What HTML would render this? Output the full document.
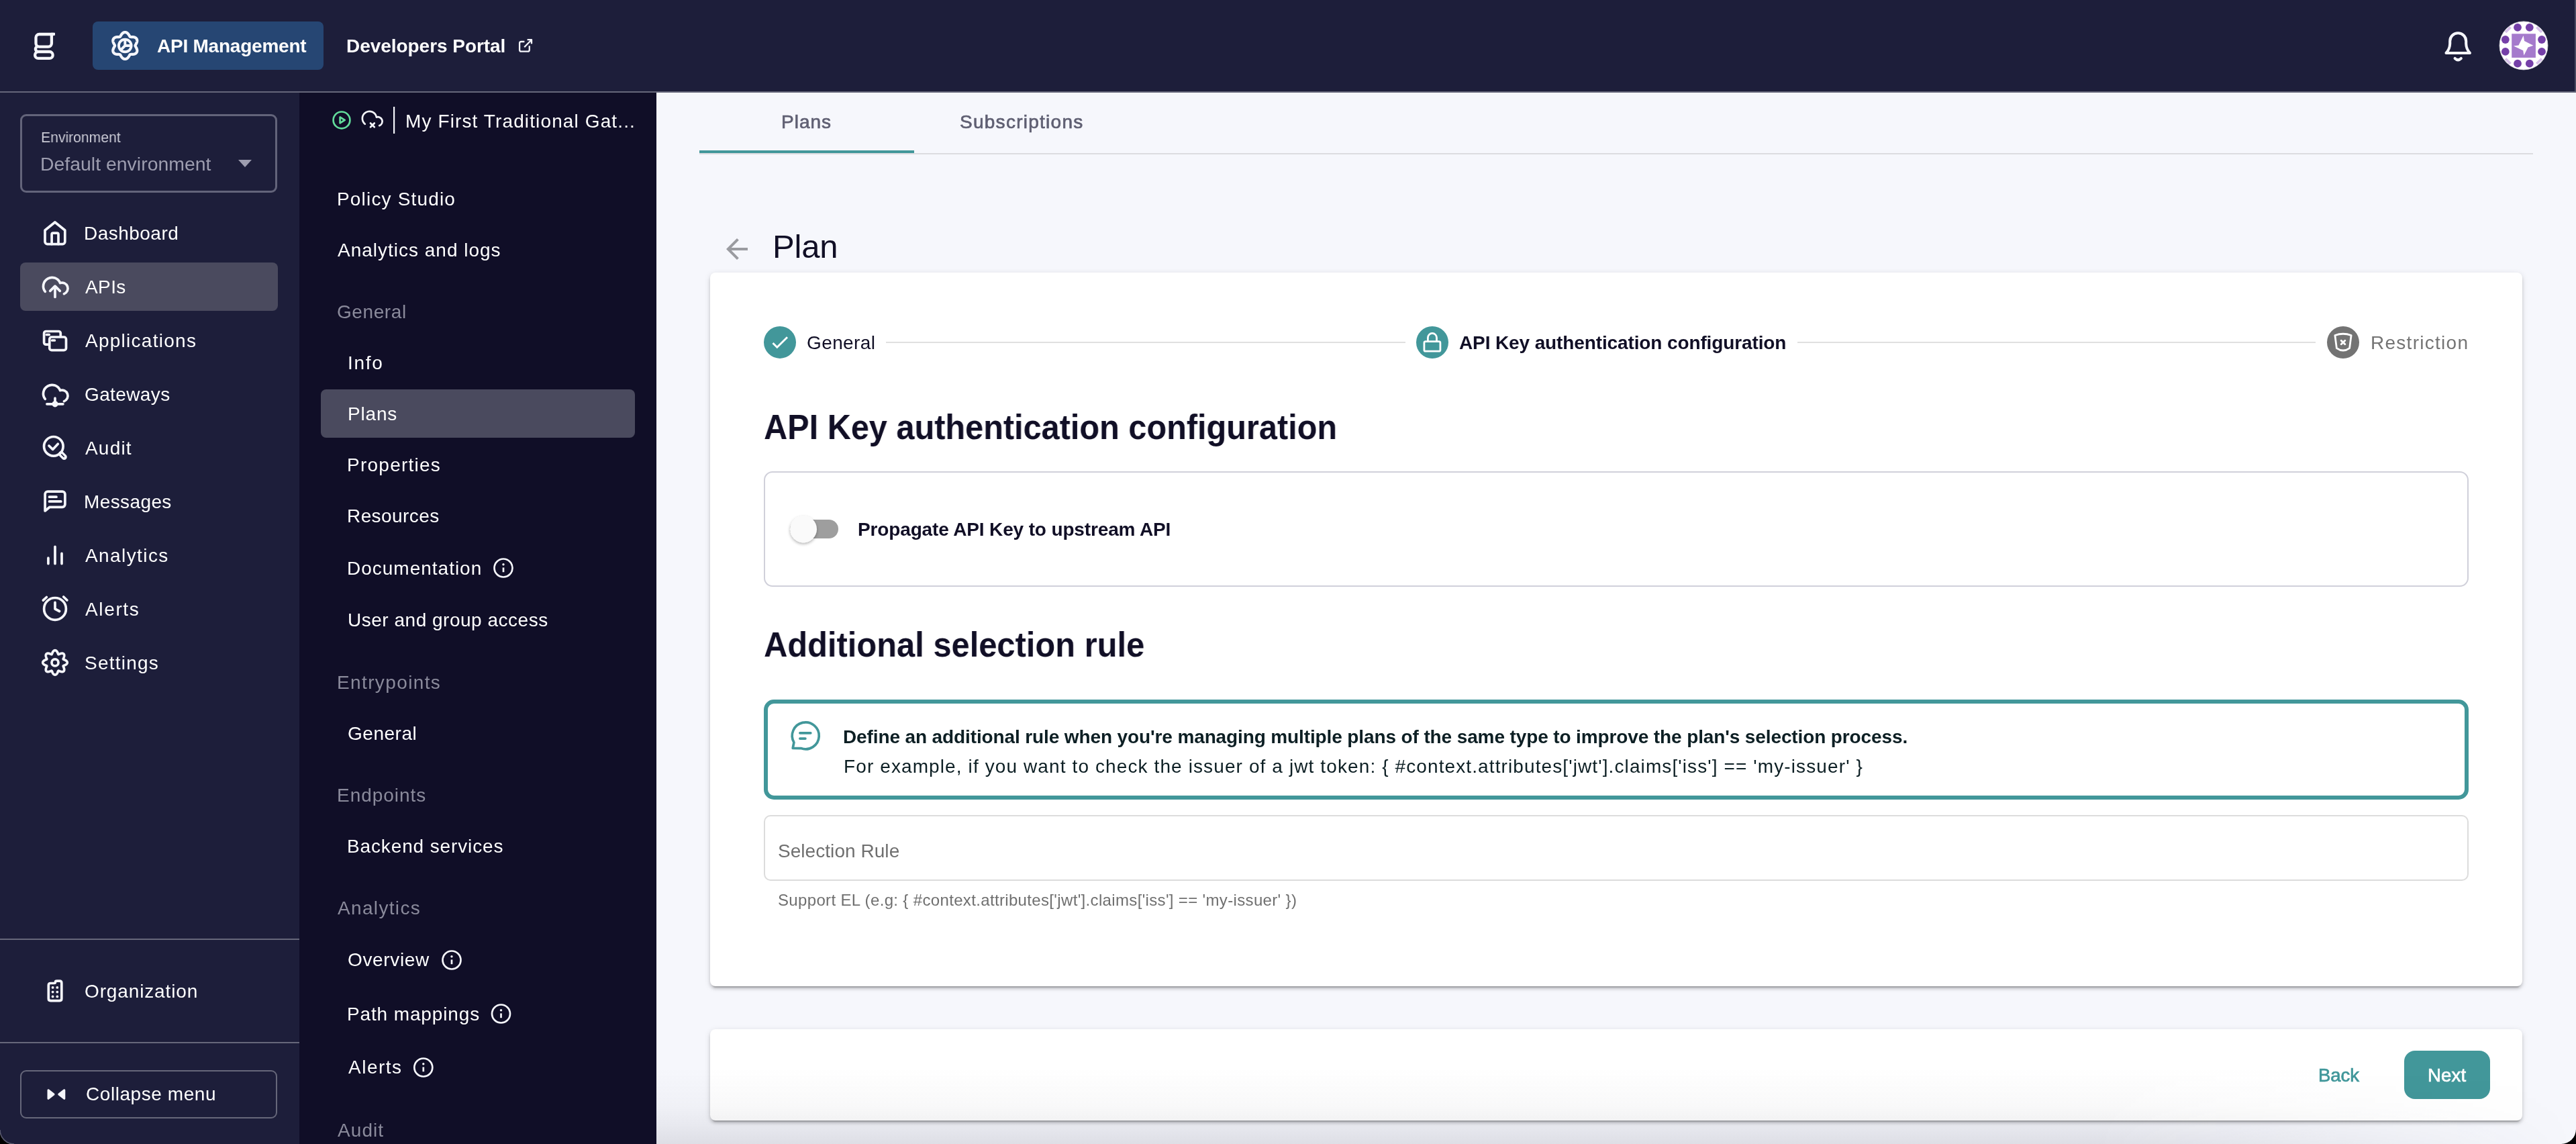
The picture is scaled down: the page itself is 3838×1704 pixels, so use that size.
<!DOCTYPE html>
<html><head><meta charset="utf-8"><title>Plan</title>
<style>
html,body{margin:0;padding:0;background:#000;overflow:hidden}
#root{position:relative;width:1919px;height:852px;overflow:hidden;background:#f6f7fc;zoom:2;font-family:"Liberation Sans",sans-serif}
.t{position:absolute;white-space:nowrap;line-height:1;font-family:"Liberation Sans",sans-serif;will-change:transform}
.a{position:absolute;box-sizing:border-box}
svg.ov{position:absolute;left:0;top:0;width:1919px;height:852px}
@media (max-width:2600px){#root{zoom:1}}
</style></head><body><div id="root">
<!-- top bar -->
<div class="a" style="left:0;top:0;width:1919px;height:69px;background:#1d1e3a;border-bottom:1px solid #66677a"></div>
<div class="a" style="left:69px;top:16.2px;width:172px;height:35.8px;background:#264673;border-radius:4px"></div>
<!-- left sidebar -->
<div class="a" style="left:0;top:69px;width:223px;height:783px;background:#1d1e3a"></div>
<div class="a" style="left:15px;top:85px;width:191.4px;height:58.5px;border:1.5px solid #63647a;border-radius:4.5px"></div>
<div class="a" style="left:177.5px;top:119px;width:0;height:0;border-left:5px solid transparent;border-right:5px solid transparent;border-top:5.5px solid #9d9daf"></div>
<div class="a" style="left:15px;top:195.6px;width:192px;height:35.9px;background:#4a4a5e;border-radius:4px"></div>
<div class="a" style="left:0;top:699px;width:223px;height:1px;background:#66677a"></div>
<div class="a" style="left:0;top:776px;width:223px;height:1px;background:#66677a"></div>
<div class="a" style="left:15px;top:797px;width:191.5px;height:35.8px;border:1px solid #66677a;border-radius:4.5px"></div>
<!-- secondary sidebar -->
<div class="a" style="left:223px;top:69px;width:266px;height:783px;background:#100e27"></div>
<div class="a" style="left:239px;top:290px;width:233.75px;height:35.8px;background:#4a4a5e;border-radius:4px"></div>
<!-- main -->
<div class="a" style="left:521px;top:114px;width:1366px;height:1px;background:#dcdce0"></div>
<div class="a" style="left:521px;top:112px;width:160px;height:2px;background:#42979a"></div>
<div class="a" style="left:529px;top:203px;width:1350px;height:531.5px;background:#fff;border-radius:4px;box-shadow:0 3px 1px -2px rgba(0,0,0,.2),0 2px 2px 0 rgba(0,0,0,.14),0 1px 5px 0 rgba(0,0,0,.12)"></div>
<div class="a" style="left:529px;top:766.5px;width:1350px;height:68px;background:#fff;border-radius:4px;box-shadow:0 3px 1px -2px rgba(0,0,0,.2),0 2px 2px 0 rgba(0,0,0,.14),0 1px 5px 0 rgba(0,0,0,.12)"></div>
<div class="a" style="left:660px;top:254.5px;width:386.75px;height:1px;background:#e0e0e0"></div>
<div class="a" style="left:1339px;top:254.5px;width:386px;height:1px;background:#e0e0e0"></div>
<div class="a" style="left:569px;top:351px;width:1270px;height:86px;border:1px solid #d0d0da;border-radius:6.5px"></div>
<div class="a" style="left:569px;top:521px;width:1270px;height:74.5px;border:3px solid #42979a;border-radius:7.5px"></div>
<div class="a" style="left:569px;top:607px;width:1270px;height:49px;border:1px solid #dcdcdc;border-radius:5px"></div>
<div class="a" style="left:1791px;top:782.5px;width:64px;height:36px;background:#42979a;border-radius:8px"></div>
<svg class="ov" viewBox="0 0 3838 1704">
<g fill="none" stroke="#f5f6fb" stroke-width="4.3" stroke-linejoin="round" stroke-linecap="butt"><path d="M80 51 H58.5 a5 5 0 0 0 -5 5 V64.6 a5 5 0 0 0 5 5 H71.9 a5 5 0 0 0 5 -5 V51"/><path d="M55.5 69 C52 71.5 52 74.5 55.5 77"/><rect x="52.1" y="77" width="26.6" height="9.9" rx="4.95"/></g><rect x="76" y="48.8" width="6" height="4" fill="#f5f6fb"/>
<path d="M201.50 68.00 L201.56 68.27 L201.65 68.54 L201.78 68.81 L201.92 69.09 L202.07 69.38 L202.24 69.68 L202.41 69.98 L202.59 70.29 L202.76 70.61 L202.94 70.93 L203.11 71.27 L203.28 71.61 L203.45 71.96 L203.60 72.31 L203.74 72.67 L203.87 73.04 L203.98 73.41 L204.08 73.78 L204.16 74.15 L204.22 74.52 L204.26 74.89 L204.28 75.26 L204.28 75.63 L204.25 75.99 L204.21 76.35 L204.14 76.70 L204.04 77.04 L203.92 77.37 L203.78 77.69 L203.62 78.00 L203.43 78.30 L203.23 78.58 L203.00 78.84 L202.75 79.10 L202.48 79.33 L202.20 79.55 L201.90 79.75 L201.58 79.94 L201.25 80.11 L200.91 80.26 L200.55 80.39 L200.19 80.51 L199.82 80.61 L199.45 80.69 L199.07 80.77 L198.68 80.82 L198.30 80.87 L197.92 80.90 L197.54 80.93 L197.16 80.94 L196.79 80.95 L196.42 80.96 L196.07 80.96 L195.72 80.96 L195.38 80.97 L195.05 80.98 L194.74 81.00 L194.44 81.03 L194.16 81.08 L193.90 81.16 L193.70 81.34 L193.51 81.56 L193.34 81.81 L193.16 82.07 L192.99 82.35 L192.82 82.64 L192.64 82.94 L192.46 83.25 L192.27 83.56 L192.08 83.88 L191.88 84.20 L191.67 84.51 L191.44 84.83 L191.21 85.14 L190.97 85.44 L190.72 85.73 L190.46 86.01 L190.19 86.28 L189.90 86.54 L189.61 86.78 L189.31 87.00 L189.00 87.20 L188.68 87.38 L188.35 87.54 L188.02 87.68 L187.68 87.80 L187.34 87.88 L187.00 87.95 L186.65 87.99 L186.30 88.00 L185.95 87.99 L185.60 87.95 L185.26 87.88 L184.92 87.80 L184.58 87.68 L184.25 87.54 L183.92 87.38 L183.60 87.20 L183.29 87.00 L182.99 86.78 L182.70 86.54 L182.41 86.28 L182.14 86.01 L181.88 85.73 L181.63 85.44 L181.39 85.14 L181.16 84.83 L180.93 84.51 L180.72 84.20 L180.52 83.88 L180.33 83.56 L180.14 83.25 L179.96 82.94 L179.78 82.64 L179.61 82.35 L179.44 82.07 L179.26 81.81 L179.09 81.56 L178.90 81.34 L178.70 81.16 L178.44 81.08 L178.16 81.03 L177.86 81.00 L177.55 80.98 L177.22 80.97 L176.88 80.96 L176.53 80.96 L176.18 80.96 L175.81 80.95 L175.44 80.94 L175.06 80.93 L174.68 80.90 L174.30 80.87 L173.92 80.82 L173.53 80.77 L173.15 80.69 L172.78 80.61 L172.41 80.51 L172.05 80.39 L171.69 80.26 L171.35 80.11 L171.02 79.94 L170.70 79.75 L170.40 79.55 L170.12 79.33 L169.85 79.10 L169.60 78.84 L169.37 78.58 L169.17 78.30 L168.98 78.00 L168.82 77.69 L168.68 77.37 L168.56 77.04 L168.46 76.70 L168.39 76.35 L168.35 75.99 L168.32 75.63 L168.32 75.26 L168.34 74.89 L168.38 74.52 L168.44 74.15 L168.52 73.78 L168.62 73.41 L168.73 73.04 L168.86 72.67 L169.00 72.31 L169.15 71.96 L169.32 71.61 L169.49 71.27 L169.66 70.93 L169.84 70.61 L170.01 70.29 L170.19 69.98 L170.36 69.68 L170.53 69.38 L170.68 69.09 L170.82 68.81 L170.95 68.54 L171.04 68.27 L171.10 68.00 L171.04 67.73 L170.95 67.46 L170.82 67.19 L170.68 66.91 L170.53 66.62 L170.36 66.32 L170.19 66.02 L170.01 65.71 L169.84 65.39 L169.66 65.07 L169.49 64.73 L169.32 64.39 L169.15 64.04 L169.00 63.69 L168.86 63.33 L168.73 62.96 L168.62 62.59 L168.52 62.22 L168.44 61.85 L168.38 61.48 L168.34 61.11 L168.32 60.74 L168.32 60.37 L168.35 60.01 L168.39 59.65 L168.46 59.30 L168.56 58.96 L168.68 58.63 L168.82 58.31 L168.98 58.00 L169.17 57.70 L169.37 57.42 L169.60 57.16 L169.85 56.90 L170.12 56.67 L170.40 56.45 L170.70 56.25 L171.02 56.06 L171.35 55.89 L171.69 55.74 L172.05 55.61 L172.41 55.49 L172.78 55.39 L173.15 55.31 L173.53 55.23 L173.92 55.18 L174.30 55.13 L174.68 55.10 L175.06 55.07 L175.44 55.06 L175.81 55.05 L176.18 55.04 L176.53 55.04 L176.88 55.04 L177.22 55.03 L177.55 55.02 L177.86 55.00 L178.16 54.97 L178.44 54.92 L178.70 54.84 L178.90 54.66 L179.09 54.44 L179.26 54.19 L179.44 53.93 L179.61 53.65 L179.78 53.36 L179.96 53.06 L180.14 52.75 L180.33 52.44 L180.52 52.12 L180.72 51.80 L180.93 51.49 L181.16 51.17 L181.39 50.86 L181.63 50.56 L181.88 50.27 L182.14 49.99 L182.41 49.72 L182.70 49.46 L182.99 49.22 L183.29 49.00 L183.60 48.80 L183.92 48.62 L184.25 48.46 L184.58 48.32 L184.92 48.20 L185.26 48.12 L185.60 48.05 L185.95 48.01 L186.30 48.00 L186.65 48.01 L187.00 48.05 L187.34 48.12 L187.68 48.20 L188.02 48.32 L188.35 48.46 L188.68 48.62 L189.00 48.80 L189.31 49.00 L189.61 49.22 L189.90 49.46 L190.19 49.72 L190.46 49.99 L190.72 50.27 L190.97 50.56 L191.21 50.86 L191.44 51.17 L191.67 51.49 L191.88 51.80 L192.08 52.12 L192.27 52.44 L192.46 52.75 L192.64 53.06 L192.82 53.36 L192.99 53.65 L193.16 53.93 L193.34 54.19 L193.51 54.44 L193.70 54.66 L193.90 54.84 L194.16 54.92 L194.44 54.97 L194.74 55.00 L195.05 55.02 L195.38 55.03 L195.72 55.04 L196.07 55.04 L196.42 55.04 L196.79 55.05 L197.16 55.06 L197.54 55.07 L197.92 55.10 L198.30 55.13 L198.68 55.18 L199.07 55.23 L199.45 55.31 L199.82 55.39 L200.19 55.49 L200.55 55.61 L200.91 55.74 L201.25 55.89 L201.58 56.06 L201.90 56.25 L202.20 56.45 L202.48 56.67 L202.75 56.90 L203.00 57.16 L203.23 57.42 L203.43 57.70 L203.62 58.00 L203.78 58.31 L203.92 58.63 L204.04 58.96 L204.14 59.30 L204.21 59.65 L204.25 60.01 L204.28 60.37 L204.28 60.74 L204.26 61.11 L204.22 61.48 L204.16 61.85 L204.08 62.22 L203.98 62.59 L203.87 62.96 L203.74 63.33 L203.60 63.69 L203.45 64.04 L203.28 64.39 L203.11 64.73 L202.94 65.07 L202.76 65.39 L202.59 65.71 L202.41 66.02 L202.24 66.32 L202.07 66.62 L201.92 66.91 L201.78 67.19 L201.65 67.46 L201.56 67.73 Z" fill="none" stroke="#f5f6fb" stroke-width="4.2" stroke-linejoin="round"/>
<g fill="none" stroke="#f5f6fb" stroke-width="3.9" stroke-linecap="butt"><circle cx="186.3" cy="68" r="9.3"/><path d="M186.3 58.5 V68 H196 M186.3 68 L179.5 74.8"/></g>
<g fill="none" stroke="#f5f6fb" stroke-width="2.3" stroke-linecap="butt" stroke-linejoin="round"><path d="M781.4 62 H776.6 a2.5 2.5 0 0 0 -2.5 2.5 V74.2 a2.5 2.5 0 0 0 2.5 2.5 H786.3 a2.5 2.5 0 0 0 2.5 -2.5 V68.3"/><path d="M781.2 70.2 L792 59.2 M785.6 59.2 H792 V65.2"/></g>
<g fill="none" stroke="#f5f6fb" stroke-width="4.1" stroke-linejoin="round" stroke-linecap="round"><path d="M3644.5 79 Q3650 73 3650.2 65 V61.2 A12 12 0 0 1 3674.2 61.2 V65 Q3674.4 73 3679.9 79 Z"/><path d="M3657.6 87 Q3662.2 91.5 3666.8 87"/></g>
<circle cx="3760" cy="67.9" r="36" fill="#fff" stroke="#d9d9e0" stroke-width="0.8"/>
<circle cx="3751" cy="40.8" r="5.9" fill="#7540a8"/>
<circle cx="3768.8" cy="40.8" r="5.9" fill="#7540a8"/>
<circle cx="3732.8" cy="59" r="5.9" fill="#7540a8"/>
<circle cx="3732.8" cy="76.9" r="5.9" fill="#7540a8"/>
<circle cx="3787" cy="59" r="5.9" fill="#7540a8"/>
<circle cx="3787" cy="76.9" r="5.9" fill="#7540a8"/>
<circle cx="3751" cy="94.7" r="5.9" fill="#7540a8"/>
<circle cx="3768.8" cy="94.7" r="5.9" fill="#7540a8"/>
<g stroke="#d7c1ea" stroke-width="3.8" stroke-linecap="butt"><path d="M3733 48 L3740.5 40.5 M3779.3 40.5 L3787 48 M3733 87.5 L3740.5 95 M3779.3 95 L3787 87.5"/></g>
<rect x="3742.2" y="50.3" width="35.7" height="35.6" fill="#a57acc"/>
<path d="M3759.7 53 L3761 61 L3774.4 67.8 L3766.5 70.6 L3760.4 82.4 L3759.2 75.3 L3745 68.5 L3752.5 67.5 Z" fill="#fff"/>
<g fill="none" stroke="#f5f6fb" stroke-width="3.7" stroke-linejoin="round" stroke-linecap="round">
<path d="M67 360 V343 L81.9 331 L96.8 343 V360 a3.6 3.6 0 0 1 -3.6 3.6 H70.6 a3.6 3.6 0 0 1 -3.6 -3.6 Z"/><path d="M77.1 363.6 V349.2 a2 2 0 0 1 2 -2 H85 a2 2 0 0 1 2 2 V363.6"/>
<path d="M67.3 434.4 A13 13 0 1 1 89.6 421.6 A8.3 8.3 0 0 1 95.4 437.7"/><path d="M82 442.5 V426.5 M74.7 433.4 L82 426.1 L89.3 433.4"/>
<path d="M72 513.2 H68.6 a3 3 0 0 1 -3 -3 V496.5 a3 3 0 0 1 3 -3 H87.3 a3 3 0 0 1 3 3 V501"/><rect x="73.75" y="502" width="24.75" height="19.6" rx="3.2"/><path d="M69.3 498.5 H73.3 M77.6 507 H81.4"/>
<path d="M67.3 594.4 A13 13 0 1 1 89.6 581.6 A8.3 8.3 0 0 1 95.4 597.7"/><path d="M82 593.2 V601.8 M69.9 601.8 H93.9"/>
</g>
<circle cx="82" cy="601.8" r="4.6" fill="#f5f6fb"/>
<g fill="none" stroke="#f5f6fb" stroke-width="3.7" stroke-linejoin="round" stroke-linecap="round">
<circle cx="79.8" cy="664.8" r="14.3"/><path d="M73 664 L78.6 669.4 L86.3 661.3"/>
</g>
<path d="M91.2 676.3 L95.6 680.7" stroke="#f5f6fb" stroke-width="8.4" stroke-linecap="round"/><path d="M91.8 676.9 L95.2 680.3" stroke="#1d1e3a" stroke-width="1.5" stroke-linecap="round"/>
<g fill="none" stroke="#f5f6fb" stroke-width="3.7" stroke-linejoin="round" stroke-linecap="round">
<path d="M74 755.3 H92.9 a4 4 0 0 0 4 -4 V736.1 a4 4 0 0 0 -4 -4 H71.1 a4 4 0 0 0 -4 4 V761 Z"/><path d="M73.5 740.2 H84 M73.5 746.9 H90.8"/>
<path d="M71.9 831.2 V839.6 M82 814.3 V839.6 M92 824.4 V839.6" stroke-width="3.7"/>
<circle cx="82" cy="906.9" r="16.4"/><path d="M82 897.4 V907 L88.6 910.5"/><path d="M64.3 894.2 L69.4 889.5 M94.7 889 L99.9 894"/>
<path d="M100.20 986.90 L100.18 987.19 L100.14 987.47 L100.06 987.75 L99.95 988.03 L99.81 988.30 L99.64 988.57 L99.44 988.83 L99.22 989.08 L98.97 989.32 L98.71 989.55 L98.42 989.77 L98.12 989.98 L97.81 990.17 L97.48 990.36 L97.15 990.54 L96.81 990.70 L96.47 990.86 L96.13 991.00 L95.80 991.14 L95.47 991.28 L95.16 991.41 L94.87 991.53 L94.60 991.66 L94.37 991.80 L94.20 991.95 L94.21 992.18 L94.28 992.44 L94.38 992.72 L94.49 993.02 L94.62 993.33 L94.76 993.65 L94.89 993.99 L95.03 994.33 L95.16 994.68 L95.28 995.04 L95.39 995.40 L95.49 995.76 L95.57 996.12 L95.64 996.49 L95.69 996.84 L95.71 997.19 L95.71 997.54 L95.69 997.87 L95.65 998.19 L95.58 998.50 L95.49 998.79 L95.37 999.07 L95.23 999.32 L95.06 999.56 L94.87 999.77 L94.66 999.96 L94.42 1000.13 L94.17 1000.27 L93.89 1000.39 L93.60 1000.48 L93.29 1000.55 L92.97 1000.59 L92.64 1000.61 L92.29 1000.61 L91.94 1000.59 L91.59 1000.54 L91.22 1000.47 L90.86 1000.39 L90.50 1000.29 L90.14 1000.18 L89.78 1000.06 L89.43 999.93 L89.09 999.79 L88.75 999.66 L88.43 999.52 L88.12 999.39 L87.82 999.28 L87.54 999.18 L87.28 999.11 L87.05 999.10 L86.90 999.27 L86.76 999.50 L86.63 999.77 L86.51 1000.06 L86.38 1000.37 L86.24 1000.70 L86.10 1001.03 L85.96 1001.37 L85.80 1001.71 L85.64 1002.05 L85.46 1002.38 L85.27 1002.71 L85.08 1003.02 L84.87 1003.32 L84.65 1003.61 L84.42 1003.87 L84.18 1004.12 L83.93 1004.34 L83.67 1004.54 L83.40 1004.71 L83.13 1004.85 L82.85 1004.96 L82.57 1005.04 L82.29 1005.08 L82.00 1005.10 L81.71 1005.08 L81.43 1005.04 L81.15 1004.96 L80.87 1004.85 L80.60 1004.71 L80.33 1004.54 L80.07 1004.34 L79.82 1004.12 L79.58 1003.87 L79.35 1003.61 L79.13 1003.32 L78.92 1003.02 L78.73 1002.71 L78.54 1002.38 L78.36 1002.05 L78.20 1001.71 L78.04 1001.37 L77.90 1001.03 L77.76 1000.70 L77.62 1000.37 L77.49 1000.06 L77.37 999.77 L77.24 999.50 L77.10 999.27 L76.95 999.10 L76.72 999.11 L76.46 999.18 L76.18 999.28 L75.88 999.39 L75.57 999.52 L75.25 999.66 L74.91 999.79 L74.57 999.93 L74.22 1000.06 L73.86 1000.18 L73.50 1000.29 L73.14 1000.39 L72.78 1000.47 L72.41 1000.54 L72.06 1000.59 L71.71 1000.61 L71.36 1000.61 L71.03 1000.59 L70.71 1000.55 L70.40 1000.48 L70.11 1000.39 L69.83 1000.27 L69.58 1000.13 L69.34 999.96 L69.13 999.77 L68.94 999.56 L68.77 999.32 L68.63 999.07 L68.51 998.79 L68.42 998.50 L68.35 998.19 L68.31 997.87 L68.29 997.54 L68.29 997.19 L68.31 996.84 L68.36 996.49 L68.43 996.12 L68.51 995.76 L68.61 995.40 L68.72 995.04 L68.84 994.68 L68.97 994.33 L69.11 993.99 L69.24 993.65 L69.38 993.33 L69.51 993.02 L69.62 992.72 L69.72 992.44 L69.79 992.18 L69.80 991.95 L69.63 991.80 L69.40 991.66 L69.13 991.53 L68.84 991.41 L68.53 991.28 L68.20 991.14 L67.87 991.00 L67.53 990.86 L67.19 990.70 L66.85 990.54 L66.52 990.36 L66.19 990.17 L65.88 989.98 L65.58 989.77 L65.29 989.55 L65.03 989.32 L64.78 989.08 L64.56 988.83 L64.36 988.57 L64.19 988.30 L64.05 988.03 L63.94 987.75 L63.86 987.47 L63.82 987.19 L63.80 986.90 L63.82 986.61 L63.86 986.33 L63.94 986.05 L64.05 985.77 L64.19 985.50 L64.36 985.23 L64.56 984.97 L64.78 984.72 L65.03 984.48 L65.29 984.25 L65.58 984.03 L65.88 983.82 L66.19 983.63 L66.52 983.44 L66.85 983.26 L67.19 983.10 L67.53 982.94 L67.87 982.80 L68.20 982.66 L68.53 982.52 L68.84 982.39 L69.13 982.27 L69.40 982.14 L69.63 982.00 L69.80 981.85 L69.79 981.62 L69.72 981.36 L69.62 981.08 L69.51 980.78 L69.38 980.47 L69.24 980.15 L69.11 979.81 L68.97 979.47 L68.84 979.12 L68.72 978.76 L68.61 978.40 L68.51 978.04 L68.43 977.68 L68.36 977.31 L68.31 976.96 L68.29 976.61 L68.29 976.26 L68.31 975.93 L68.35 975.61 L68.42 975.30 L68.51 975.01 L68.63 974.73 L68.77 974.48 L68.94 974.24 L69.13 974.03 L69.34 973.84 L69.58 973.67 L69.83 973.53 L70.11 973.41 L70.40 973.32 L70.71 973.25 L71.03 973.21 L71.36 973.19 L71.71 973.19 L72.06 973.21 L72.41 973.26 L72.78 973.33 L73.14 973.41 L73.50 973.51 L73.86 973.62 L74.22 973.74 L74.57 973.87 L74.91 974.01 L75.25 974.14 L75.57 974.28 L75.88 974.41 L76.18 974.52 L76.46 974.62 L76.72 974.69 L76.95 974.70 L77.10 974.53 L77.24 974.30 L77.37 974.03 L77.49 973.74 L77.62 973.43 L77.76 973.10 L77.90 972.77 L78.04 972.43 L78.20 972.09 L78.36 971.75 L78.54 971.42 L78.73 971.09 L78.92 970.78 L79.13 970.48 L79.35 970.19 L79.58 969.93 L79.82 969.68 L80.07 969.46 L80.33 969.26 L80.60 969.09 L80.87 968.95 L81.15 968.84 L81.43 968.76 L81.71 968.72 L82.00 968.70 L82.29 968.72 L82.57 968.76 L82.85 968.84 L83.13 968.95 L83.40 969.09 L83.67 969.26 L83.93 969.46 L84.18 969.68 L84.42 969.93 L84.65 970.19 L84.87 970.48 L85.08 970.78 L85.27 971.09 L85.46 971.42 L85.64 971.75 L85.80 972.09 L85.96 972.43 L86.10 972.77 L86.24 973.10 L86.38 973.43 L86.51 973.74 L86.63 974.03 L86.76 974.30 L86.90 974.53 L87.05 974.70 L87.28 974.69 L87.54 974.62 L87.82 974.52 L88.12 974.41 L88.43 974.28 L88.75 974.14 L89.09 974.01 L89.43 973.87 L89.78 973.74 L90.14 973.62 L90.50 973.51 L90.86 973.41 L91.22 973.33 L91.59 973.26 L91.94 973.21 L92.29 973.19 L92.64 973.19 L92.97 973.21 L93.29 973.25 L93.60 973.32 L93.89 973.41 L94.17 973.53 L94.42 973.67 L94.66 973.84 L94.87 974.03 L95.06 974.24 L95.23 974.48 L95.37 974.73 L95.49 975.01 L95.58 975.30 L95.65 975.61 L95.69 975.93 L95.71 976.26 L95.71 976.61 L95.69 976.96 L95.64 977.31 L95.57 977.68 L95.49 978.04 L95.39 978.40 L95.28 978.76 L95.16 979.12 L95.03 979.47 L94.89 979.81 L94.76 980.15 L94.62 980.47 L94.49 980.78 L94.38 981.08 L94.28 981.36 L94.21 981.62 L94.20 981.85 L94.37 982.00 L94.60 982.14 L94.87 982.27 L95.16 982.39 L95.47 982.52 L95.80 982.66 L96.13 982.80 L96.47 982.94 L96.81 983.10 L97.15 983.26 L97.48 983.44 L97.81 983.63 L98.12 983.82 L98.42 984.03 L98.71 984.25 L98.97 984.48 L99.22 984.72 L99.44 984.97 L99.64 985.23 L99.81 985.50 L99.95 985.77 L100.06 986.05 L100.14 986.33 L100.18 986.61 Z"/>
<circle cx="82" cy="986.9" r="5"/>
<path d="M72.3 1467.5 Q72.3 1464.5 75.3 1464.5 H80.5 Q82.5 1464.5 82.5 1462.8 Q82.5 1461.2 84.8 1461.2 H88.8 Q91.8 1461.2 91.8 1464.2 V1487.6 Q91.8 1490.6 88.8 1490.6 H75.3 Q72.3 1490.6 72.3 1487.6 Z"/>
</g>
<circle cx="78.6" cy="1470.9" r="1.9" fill="#f5f6fb"/>
<circle cx="78.6" cy="1477.6" r="1.9" fill="#f5f6fb"/>
<circle cx="78.6" cy="1484.4" r="1.9" fill="#f5f6fb"/>
<circle cx="85.3" cy="1470.9" r="1.9" fill="#f5f6fb"/>
<circle cx="85.3" cy="1477.6" r="1.9" fill="#f5f6fb"/>
<circle cx="85.3" cy="1484.4" r="1.9" fill="#f5f6fb"/>
<g fill="#f5f6fb" stroke="#f5f6fb" stroke-width="3" stroke-linejoin="round"><path d="M72 1623.8 L80 1630 L72 1636.3 Z"/><path d="M95.8 1623.8 L87.8 1630 L95.8 1636.3 Z"/></g>
<g fill="none" stroke="#62dc9b" stroke-width="2.7" stroke-linejoin="round"><circle cx="509" cy="178.9" r="12.4"/><path d="M506.6 174.5 L513.7 178.9 L506.6 183.3 Z"/></g>
<g fill="none" stroke="#f5f6fb" stroke-width="2.7" stroke-linecap="round" stroke-linejoin="round"><path d="M543.8 184.7 A10.6 10.6 0 1 1 560.9 174.6 A6.4 6.4 0 0 1 565.2 187.1"/><path d="M552 183.5 L557.8 189.3 M557.8 183.5 L552 189.3"/></g>
<rect x="586" y="159" width="2.2" height="40" fill="#f5f6fb"/>
<g fill="none" stroke="#f5f6fb" stroke-width="2.7"><circle cx="750" cy="846" r="13.5"/></g><circle cx="750" cy="840.7" r="1.7" fill="#f5f6fb"/><rect x="748.65" y="845.4" width="2.7" height="6.8" fill="#f5f6fb"/>
<g fill="none" stroke="#f5f6fb" stroke-width="2.7"><circle cx="673" cy="1430" r="13.5"/></g><circle cx="673" cy="1424.7" r="1.7" fill="#f5f6fb"/><rect x="671.65" y="1429.4" width="2.7" height="6.8" fill="#f5f6fb"/>
<g fill="none" stroke="#f5f6fb" stroke-width="2.7"><circle cx="746.5" cy="1510" r="13.5"/></g><circle cx="746.5" cy="1504.7" r="1.7" fill="#f5f6fb"/><rect x="745.15" y="1509.4" width="2.7" height="6.8" fill="#f5f6fb"/>
<g fill="none" stroke="#f5f6fb" stroke-width="2.7"><circle cx="630.8" cy="1590" r="13.5"/></g><circle cx="630.8" cy="1584.7" r="1.7" fill="#f5f6fb"/><rect x="629.4499999999999" y="1589.4" width="2.7" height="6.8" fill="#f5f6fb"/>
<path transform="translate(1074 347) scale(2)" d="M20 11H7.83l5.59-5.59L12 4l-8 8 8 8 1.41-1.41L7.83 13H20v-2z" fill="#9a9ba0"/>
<circle cx="1162" cy="509.9" r="24" fill="#42979a"/><path d="M1151.5 511 L1157.8 517.3 L1173 502.2" fill="none" stroke="#fff" stroke-width="2.9"/>
<circle cx="2134" cy="510" r="24" fill="#42979a"/><g fill="none" stroke="#fff" stroke-width="2.8" stroke-linejoin="round"><rect x="2121.9" y="508.7" width="24" height="14.5" rx="2"/><path d="M2127.4 508.7 V503 A6.55 6.55 0 0 1 2140.5 503 V508.7"/></g>
<circle cx="3491" cy="510" r="24" fill="#737373"/><g fill="none" stroke="#fff" stroke-width="2.8" stroke-linejoin="round" stroke-linecap="round"><path d="M3478.9 499.5 Q3491 495 3503.1 499.5 L3500.6 518.6 Q3491 525.5 3481.4 518.6 Z"/><path d="M3488.2 507.2 L3493.8 512.8 M3493.8 507.2 L3488.2 512.8"/></g>
<rect x="1177" y="774" width="72" height="28" rx="14" fill="#9e9e9e"/>
<defs><filter id="sh" x="-50%" y="-50%" width="200%" height="200%"><feDropShadow dx="0" dy="2" stdDeviation="2" flood-color="#000" flood-opacity="0.3"/></filter></defs>
<circle cx="1197" cy="788.2" r="20" fill="#fafafa" filter="url(#sh)"/>
<g fill="none" stroke="#42979a" stroke-width="3.7" stroke-linejoin="round" stroke-linecap="round"><path d="M1182.9 1105.8 L1181.2 1114.4 L1193.3 1114.6 A20 20 0 1 0 1182.9 1105.8 Z"/><path d="M1191.9 1091.8 H1207.8 M1191.9 1100.1 H1199.9"/></g>
</svg>
<div class="t" style="left:116.83px;top:27.55px;font-size:14px;font-weight:700;color:#fff;letter-spacing:-0.116px;">API Management</div>
<div class="t" style="left:258.12px;top:27.55px;font-size:14px;font-weight:700;color:#fff;letter-spacing:-0.022px;">Developers Portal</div>
<div class="t" style="left:30.40px;top:97.15px;font-size:11px;font-weight:400;color:#c9c9d4;letter-spacing:0.000px;transform:scaleX(0.9598);transform-origin:0.90px 0;">Environment</div>
<div class="t" style="left:30.19px;top:115.00px;font-size:14.2px;font-weight:400;color:#9d9daf;letter-spacing:0.010px;">Default environment</div>
<div class="t" style="left:62.41px;top:167.05px;font-size:14px;font-weight:400;color:#fff;letter-spacing:0.236px;">Dashboard</div>
<div class="t" style="left:63.50px;top:207.00px;font-size:14px;font-weight:400;color:#fff;letter-spacing:0.207px;">APIs</div>
<div class="t" style="left:63.50px;top:247.00px;font-size:14px;font-weight:400;color:#fff;letter-spacing:0.632px;">Applications</div>
<div class="t" style="left:62.84px;top:287.00px;font-size:14px;font-weight:400;color:#fff;letter-spacing:0.192px;">Gateways</div>
<div class="t" style="left:63.50px;top:327.00px;font-size:14px;font-weight:400;color:#fff;letter-spacing:0.598px;">Audit</div>
<div class="t" style="left:62.41px;top:367.00px;font-size:14px;font-weight:400;color:#fff;letter-spacing:0.196px;">Messages</div>
<div class="t" style="left:63.50px;top:407.00px;font-size:14px;font-weight:400;color:#fff;letter-spacing:0.708px;">Analytics</div>
<div class="t" style="left:63.50px;top:447.00px;font-size:14px;font-weight:400;color:#fff;letter-spacing:0.820px;">Alerts</div>
<div class="t" style="left:63.06px;top:487.00px;font-size:14px;font-weight:400;color:#fff;letter-spacing:0.620px;">Settings</div>
<div class="t" style="left:62.94px;top:731.60px;font-size:14px;font-weight:400;color:#fff;letter-spacing:0.433px;">Organization</div>
<div class="t" style="left:63.99px;top:808.21px;font-size:14px;font-weight:400;color:#fff;letter-spacing:0.280px;">Collapse menu</div>
<div class="t" style="left:301.81px;top:83.25px;font-size:14px;font-weight:400;color:#fff;letter-spacing:0.559px;">My First Traditional Gat...</div>
<div class="t" style="left:250.76px;top:141.55px;font-size:14px;font-weight:400;color:#fff;letter-spacing:0.586px;">Policy Studio</div>
<div class="t" style="left:251.40px;top:179.40px;font-size:14px;font-weight:400;color:#fff;letter-spacing:0.497px;">Analytics and logs</div>
<div class="t" style="left:250.89px;top:225.60px;font-size:14px;font-weight:400;color:#8a8a9b;letter-spacing:0.295px;">General</div>
<div class="t" style="left:258.91px;top:263.50px;font-size:14px;font-weight:400;color:#fff;letter-spacing:0.853px;">Info</div>
<div class="t" style="left:258.91px;top:301.30px;font-size:14px;font-weight:400;color:#fff;letter-spacing:0.403px;">Plans</div>
<div class="t" style="left:258.66px;top:339.60px;font-size:14px;font-weight:400;color:#fff;letter-spacing:0.625px;">Properties</div>
<div class="t" style="left:258.66px;top:377.50px;font-size:14px;font-weight:400;color:#fff;letter-spacing:0.208px;">Resources</div>
<div class="t" style="left:258.66px;top:416.25px;font-size:14px;font-weight:400;color:#fff;letter-spacing:0.497px;">Documentation</div>
<div class="t" style="left:258.88px;top:455.00px;font-size:14px;font-weight:400;color:#fff;letter-spacing:0.257px;">User and group access</div>
<div class="t" style="left:250.86px;top:501.50px;font-size:14px;font-weight:400;color:#8a8a9b;letter-spacing:0.690px;">Entrypoints</div>
<div class="t" style="left:258.89px;top:539.30px;font-size:14px;font-weight:400;color:#fff;letter-spacing:0.262px;">General</div>
<div class="t" style="left:250.86px;top:585.55px;font-size:14px;font-weight:400;color:#8a8a9b;letter-spacing:0.489px;">Endpoints</div>
<div class="t" style="left:258.46px;top:623.35px;font-size:14px;font-weight:400;color:#fff;letter-spacing:0.434px;">Backend services</div>
<div class="t" style="left:251.70px;top:669.50px;font-size:14px;font-weight:400;color:#8a8a9b;letter-spacing:0.671px;">Analytics</div>
<div class="t" style="left:258.94px;top:708.10px;font-size:14px;font-weight:400;color:#fff;letter-spacing:0.320px;">Overview</div>
<div class="t" style="left:258.51px;top:748.40px;font-size:14px;font-weight:400;color:#fff;letter-spacing:0.432px;">Path mappings</div>
<div class="t" style="left:259.60px;top:788.21px;font-size:14px;font-weight:400;color:#fff;letter-spacing:0.750px;">Alerts</div>
<div class="t" style="left:251.70px;top:835.21px;font-size:14px;font-weight:400;color:#8a8a9b;letter-spacing:0.535px;">Audit</div>
<div class="t" style="left:582.21px;top:83.75px;font-size:14px;font-weight:400;color:#5f5f72;letter-spacing:0.503px;-webkit-text-stroke:0.35px #5f5f72;">Plans</div>
<div class="t" style="left:715.11px;top:83.75px;font-size:14px;font-weight:400;color:#5f5f72;letter-spacing:0.632px;-webkit-text-stroke:0.35px #5f5f72;">Subscriptions</div>
<div class="t" style="left:575.59px;top:171.40px;font-size:24.5px;font-weight:400;color:#110f26;letter-spacing:-0.082px;">Plan</div>
<div class="t" style="left:601.24px;top:248.46px;font-size:14px;font-weight:400;color:#110f26;letter-spacing:0.195px;">General</div>
<div class="t" style="left:1086.78px;top:248.40px;font-size:14px;font-weight:700;color:#110f26;letter-spacing:-0.060px;">API Key authentication configuration</div>
<div class="t" style="left:1765.91px;top:248.40px;font-size:14px;font-weight:400;color:#747474;letter-spacing:0.635px;">Restriction</div>
<div class="t" style="left:568.89px;top:304.95px;font-size:26px;font-weight:700;color:#110f26;letter-spacing:0.000px;transform:scaleX(0.9354);transform-origin:0.41px 0;">API Key authentication configuration</div>
<div class="t" style="left:638.88px;top:387.40px;font-size:14px;font-weight:700;color:#110f26;letter-spacing:-0.072px;">Propagate API Key to upstream API</div>
<div class="t" style="left:568.89px;top:466.80px;font-size:26px;font-weight:700;color:#110f26;letter-spacing:0.000px;transform:scaleX(0.9392);transform-origin:0.41px 0;">Additional selection rule</div>
<div class="t" style="left:628.17px;top:541.80px;font-size:14px;font-weight:700;color:#0d1f24;letter-spacing:-0.060px;">Define an additional rule when you're managing multiple plans of the same type to improve the plan's selection process.</div>
<div class="t" style="left:628.31px;top:563.85px;font-size:14px;font-weight:400;color:#0d1f24;letter-spacing:0.554px;">For example, if you want to check the issuer of a jwt token: { #context.attributes['jwt'].claims['iss'] == 'my-issuer' }</div>
<div class="t" style="left:579.36px;top:627.10px;font-size:14px;font-weight:400;color:#6f6f6f;letter-spacing:0.025px;">Selection Rule</div>
<div class="t" style="left:579.30px;top:664.30px;font-size:12px;font-weight:400;color:#6f6f6f;letter-spacing:0.171px;">Support EL (e.g: { #context.attributes['jwt'].claims['iss'] == 'my-issuer' })</div>
<div class="t" style="left:1727.22px;top:793.75px;font-size:13.8px;font-weight:400;color:#40979a;letter-spacing:-0.039px;-webkit-text-stroke:0.35px #40979a;">Back</div>
<div class="t" style="left:1808.42px;top:793.75px;font-size:13.8px;font-weight:400;color:#ffffff;letter-spacing:0.052px;-webkit-text-stroke:0.35px #ffffff;">Next</div>
<div class="a" style="left:489px;top:795px;width:1430px;height:57px;background:linear-gradient(to bottom,rgba(30,30,50,0) 0%,rgba(30,30,50,0.028) 50%,rgba(30,30,50,0.062) 75%,rgba(30,30,50,0.11) 100%);-webkit-mask-image:linear-gradient(to right,#000 0%,#000 75%,rgba(0,0,0,0) 100%)"></div>
<div class="a" style="left:1918px;top:0;width:1px;height:68px;background:#4a4b60"></div>
<svg class="ov" viewBox="0 0 3838 1704" style="pointer-events:none">
<path d="M0 1683 V1704 H21 A21 21 0 0 1 0 1683 Z" fill="#000"/>
<path d="M21 1704 A21 21 0 0 1 0 1683" fill="none" stroke="#5a5b70" stroke-width="1.6"/>
<path d="M3838 1682 V1704 H3816 A22 22 0 0 0 3838 1682 Z" fill="#000"/>
</svg>
</div></body></html>
